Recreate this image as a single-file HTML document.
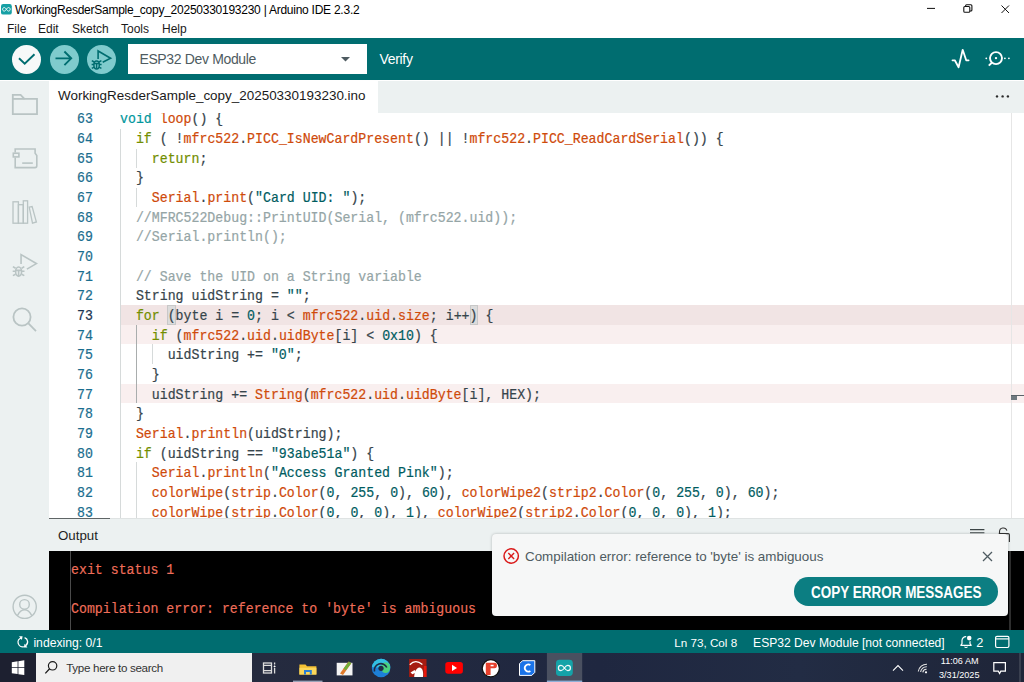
<!DOCTYPE html>
<html><head><meta charset="utf-8"><style>
*{margin:0;padding:0;box-sizing:border-box}
html,body{width:1024px;height:682px;overflow:hidden;background:#fff;font-family:"Liberation Sans",sans-serif;position:relative}
.a{position:absolute;white-space:nowrap}
svg{position:absolute;overflow:visible}
#title{left:15px;top:3px;font-size:12px;letter-spacing:-0.25px;color:#000}
.menu{top:21.7px;font-size:12px;color:#1a1a1a}
#toolbar{left:0;top:38px;width:1024px;height:42px;background:#006d70}
.circ{position:absolute;width:29px;height:29px;border-radius:50%;top:45px}
#board{left:128px;top:44.4px;width:239px;height:30px;background:#fff}
#sidebar{left:0;top:81px;width:49px;height:549px;background:#ecf1f1}
#tabbar{left:49px;top:81px;width:975px;height:32px;background:#ecf1f1}
#tab{left:49px;top:80px;width:329px;height:33px;background:#fff}
#editor{left:49px;top:113px;width:975px;height:406px;background:#fff;overflow:hidden}
.ln{position:absolute;left:0;width:44px;text-align:right;font-family:"Liberation Mono",monospace;font-size:13.24px;line-height:19.6px;color:#1a6d8e;height:19.6px;transform:scaleY(1.07);transform-origin:0 13.3px;-webkit-text-stroke:0.2px}
.cl i{font-style:normal}
.ln.act{color:#1b3552}
.cl{position:absolute;left:71px;white-space:pre;font-family:"Liberation Mono",monospace;font-size:13.24px;line-height:19.6px;color:#36444b;height:19.6px;transform:scaleY(1.07);transform-origin:0 13.3px;-webkit-text-stroke:0.2px}
#outhdr{left:49px;top:519px;width:975px;height:32px;background:#ecf1f1}
#console{left:49px;top:551px;width:975px;height:79px;background:#000}
.con{position:absolute;left:22px;font-family:"Liberation Mono",monospace;font-size:13.24px;line-height:19.6px;color:#ef6e5a;white-space:pre;transform:scaleY(1.08);transform-origin:0 13.3px;-webkit-text-stroke:0.15px}
#status{left:0;top:630px;width:1024px;height:23px;background:#006d70}
.st{top:636px;font-size:12px;color:#fff}
#taskbar{left:0;top:653px;width:1024px;height:29px;background:linear-gradient(90deg,#1d2030 0,#1d2030 36px,#252b3f 260px,#1f2740 600px,#222c44 800px,#1f2538 1024px)}
#popup{left:492px;top:534px;width:516px;height:82px;background:#f6f7f7;border-radius:4px;box-shadow:0 0 3px rgba(0,0,0,0.25)}
#copybtn{left:301.5px;top:43.4px;width:204px;height:28.4px;border-radius:14.2px;background:#0c7e82}
#copytxt{left:318.5px;top:48.7px;color:#fff;font-weight:bold;font-size:14px;transform:scale(0.963,1.18);transform-origin:0 0}
</style></head><body>
<div class="a" id="title">WorkingResderSample_copy_20250330193230 | Arduino IDE 2.3.2</div>
<svg style="left:1.2px;top:4.1px" width="12" height="11" viewBox="0 0 12 11"><rect x="0" y="0" width="10.8" height="10.6" rx="2.2" fill="#17a0a5"/><path d="M5.4 5.3C4.7 4.3 4.1 3.5 3.3 3.5C2.3 3.5 1.6 4.3 1.6 5.3S2.3 7.1 3.3 7.1C4.1 7.1 4.7 6.3 5.4 5.3C6.1 4.3 6.7 3.5 7.5 3.5C8.5 3.5 9.2 4.3 9.2 5.3S8.5 7.1 7.5 7.1C6.7 7.1 6.1 6.3 5.4 5.3Z" fill="none" stroke="#f0fafa" stroke-width="1"/></svg>
<div class="a menu" style="left:7px">File</div>
<div class="a menu" style="left:38px">Edit</div>
<div class="a menu" style="left:72px">Sketch</div>
<div class="a menu" style="left:121px">Tools</div>
<div class="a menu" style="left:162px">Help</div>
<svg style="left:927px;top:7px" width="9" height="2"><rect x="0" y="0.9" width="8" height="1" fill="#111"/></svg>
<svg style="left:963px;top:4px" width="10" height="10" viewBox="0 0 10 10"><path d="M2.6 2.3V1.7a1 1 0 0 1 1-1H7.9a1 1 0 0 1 1 1V6a1 1 0 0 1-1 1H7" fill="none" stroke="#111" stroke-width="1.1"/><rect x="0.8" y="2.5" width="6" height="5.8" rx="1.1" fill="none" stroke="#111" stroke-width="1.1"/></svg>
<svg style="left:1000.6px;top:4.7px" width="9" height="9" viewBox="0 0 9 9"><path d="M0.5 0.5L8 8M8 0.5L0.5 8" stroke="#111" stroke-width="1"/></svg>

<div class="a" id="toolbar"></div>
<div class="circ" style="left:12.25px;background:#f7f9f9"></div>
<svg style="left:0;top:38px" width="130" height="42">
<path d="M19 20.3L24.7 25.8L34.5 16.3" fill="none" stroke="#006d70" stroke-width="1.9"/>
</svg>
<div class="circ" style="left:49.65px;background:#7fcbcd"></div>
<svg style="left:0;top:38px" width="130" height="42">
<path d="M55.5 20.35H71.2M64.4 13.5L71.2 20.35L64.4 27.2" fill="none" stroke="#006d70" stroke-width="1.9"/>
</svg>
<div class="circ" style="left:87px;background:#7fcbcd"></div>
<svg style="left:0;top:38px" width="130" height="42">
<path d="M98.1 21V13L110.6 20.3L102.7 24.3" fill="none" stroke="#006d70" stroke-width="1.6"/>
<g fill="none" stroke="#006d70" stroke-width="1.5"><ellipse cx="96.6" cy="26.9" rx="2.7" ry="4"/><path d="M93.9 25.6H99.3M96.6 25.6V30.8M91.8 22.6L94.2 24M101.4 22.6L99 24M91.6 26.6H94M101.6 26.6H99.2M91.8 30.4L94.2 29.2M101.4 30.4L99 29.2"/></g>
</svg>
<div class="a" id="board"></div>
<div class="a" style="left:139.4px;top:51px;font-size:14px;letter-spacing:-0.35px;color:#4e5b61">ESP32 Dev Module</div>
<svg style="left:340px;top:56px" width="11" height="7"><path d="M1 1H10L5.5 5.6Z" fill="#4e5b61"/></svg>
<div class="a" style="left:379.4px;top:51px;font-size:14px;letter-spacing:-0.3px;color:#fff">Verify</div>
<svg style="left:940px;top:38px" width="84" height="42">
<path d="M12.5 22.3H14.8L18.6 29.2L22.7 11.8L26.2 22.3H28.6" fill="none" stroke="#fff" stroke-width="1.8" stroke-linejoin="round" stroke-linecap="round"/>
<circle cx="56" cy="20.1" r="6" fill="none" stroke="#fff" stroke-width="1.9"/>
<circle cx="56" cy="20.1" r="1.2" fill="#fff"/>
<path d="M48.8 27.6L51.8 24.8" stroke="#fff" stroke-width="1.9"/>
<circle cx="46.3" cy="20.3" r="0.9" fill="#fff"/><circle cx="64.9" cy="20.3" r="0.9" fill="#fff"/><circle cx="68.9" cy="20.3" r="0.9" fill="#fff"/>
</svg>

<div class="a" id="sidebar"></div>
<svg style="left:0;top:81px" width="49" height="549" viewBox="0 81 49 549">
<g fill="none" stroke="#b9c4c4" stroke-width="1.8">
<path d="M12.8 114.1V94.8H20.6L24.4 98.9H37V114.1Z"/>
<path d="M12.8 98.9H24.4"/>
</g>
<g fill="none" stroke="#b9c4c4" stroke-width="1.6">
<path d="M15.2 152.6V149H35.1V153.3L36.8 155.6V165.8Q36.8 167.6 35 167.6H15.2V157.4"/>
<rect x="13.3" y="153.2" width="5.6" height="3.7"/>
<path d="M22.2 163.1H32.8"/>
</g>
<g fill="none" stroke="#b9c4c4" stroke-width="1.3">
<rect x="13" y="201.8" width="5.4" height="21.4"/>
<rect x="18.4" y="204.7" width="4.9" height="18.5"/>
<rect x="23.3" y="200.8" width="4.3" height="22.4"/>
<path d="M29.2 207.1L32.1 206.5L36.4 222L32.5 223.1Z"/>
</g>
<g fill="none" stroke="#b9c4c4" stroke-width="1.6">
<path d="M21.05 264.1V254.6L36.4 263.6L26.9 269.1"/>
<ellipse cx="18.6" cy="271.6" rx="3" ry="4.6"/>
<path d="M15.6 270.4H21.6M18.6 270.4V276M12.9 266.6L15.6 268.2M24.3 266.6L21.6 268.2M12.7 271.2H15.6M24.5 271.2H21.6M12.9 275.6L15.6 274.2M24.3 275.6L21.6 274.2"/>
</g>
<g fill="none" stroke="#b9c4c4" stroke-width="1.8">
<circle cx="22" cy="317" r="8.6"/>
<path d="M28.4 323.4L36 331.2"/>
</g>
<g fill="none" stroke="#b9c4c4" stroke-width="1.4">
<circle cx="24.7" cy="606.8" r="11.6"/>
<circle cx="24.5" cy="604.4" r="4.8"/>
<path d="M17.4 615.6C19.5 611.6 22 609.8 24.6 609.8S29.7 611.6 31.8 615.6"/>
</g>
</svg>

<div class="a" id="tabbar"></div>
<div class="a" id="tab"></div>
<div class="a" style="left:58px;top:88.4px;font-size:13.45px;color:#1a1a1a">WorkingResderSample_copy_20250330193230.ino</div>
<svg style="left:990px;top:92px" width="24" height="8"><circle cx="7" cy="4.4" r="1.2" fill="#2a2a2a"/><circle cx="12.6" cy="4.4" r="1.2" fill="#2a2a2a"/><circle cx="17.9" cy="4.4" r="1.2" fill="#2a2a2a"/></svg>

<div class="a" id="editor">
<div class="a" style="left:71.8px;top:192.3px;width:904px;height:19.5px;background:#f1e4e4"></div>
<div class="a" style="left:71.8px;top:211.8px;width:904px;height:19.2px;background:#f9efef"></div>
<div class="a" style="left:71.8px;top:270.7px;width:904px;height:19.2px;background:#f9efef"></div>
<div class="a" style="left:71px;top:15.9px;width:1px;height:400px;background:#d6dada"></div>
<div class="a" style="left:86.9px;top:35.5px;width:1px;height:19.6px;background:#d6dada"></div>
<div class="a" style="left:86.9px;top:74.7px;width:1px;height:19.6px;background:#d6dada"></div>
<div class="a" style="left:86.9px;top:211.7px;width:1.3px;height:78.4px;background:#a9adad"></div>
<div class="a" style="left:102.8px;top:231.3px;width:1px;height:19.6px;background:#d6dada"></div>
<div class="a" style="left:86.9px;top:348.9px;width:1px;height:60px;background:#d6dada"></div>
<div class="a" style="left:118.4px;top:192.3px;width:8.6px;height:19.3px;background:#dcdcdc;border:1px solid #c8c8c8"></div>
<div class="a" style="left:421.2px;top:192.3px;width:8.1px;height:19.3px;background:#dcdcdc;border:1px solid #c8c8c8"></div>
<div class="ln" style="top:-2.70px">63</div>
<div class="cl" style="top:-2.70px"><i style="color:#00979d">void</i> <i style="color:#cf4a0a">loop</i>() {</div>
<div class="ln" style="top:16.97px">64</div>
<div class="cl" style="top:16.97px">  <i style="color:#728e00">if</i> ( !<i style="color:#cf4a0a">mfrc522</i>.<i style="color:#cf4a0a">PICC_IsNewCardPresent</i>() || !<i style="color:#cf4a0a">mfrc522</i>.<i style="color:#cf4a0a">PICC_ReadCardSerial</i>()) {</div>
<div class="ln" style="top:36.64px">65</div>
<div class="cl" style="top:36.64px">    <i style="color:#728e00">return</i>;</div>
<div class="ln" style="top:56.31px">66</div>
<div class="cl" style="top:56.31px">  }</div>
<div class="ln" style="top:75.98px">67</div>
<div class="cl" style="top:75.98px">    <i style="color:#cf4a0a">Serial</i>.<i style="color:#cf4a0a">print</i>(<i style="color:#005c5f">&quot;Card UID: &quot;</i>);</div>
<div class="ln" style="top:95.65px">68</div>
<div class="cl" style="top:95.65px">  <i style="color:#95a5a6">//MFRC522Debug::PrintUID(Serial, (mfrc522.uid));</i></div>
<div class="ln" style="top:115.32px">69</div>
<div class="cl" style="top:115.32px">  <i style="color:#95a5a6">//Serial.println();</i></div>
<div class="ln" style="top:134.99px">70</div>
<div class="cl" style="top:134.99px"></div>
<div class="ln" style="top:154.66px">71</div>
<div class="cl" style="top:154.66px">  <i style="color:#95a5a6">// Save the UID on a String variable</i></div>
<div class="ln" style="top:174.33px">72</div>
<div class="cl" style="top:174.33px">  String uidString = <i style="color:#005c5f">&quot;&quot;</i>;</div>
<div class="ln act" style="top:194.00px">73</div>
<div class="cl" style="top:194.00px">  <i style="color:#728e00">for</i> (byte i = <i style="color:#005c5f">0</i>; i &lt; <i style="color:#cf4a0a">mfrc522</i>.<i style="color:#cf4a0a">uid</i>.<i style="color:#cf4a0a">size</i>; i++) {</div>
<div class="ln" style="top:213.67px">74</div>
<div class="cl" style="top:213.67px">    <i style="color:#728e00">if</i> (<i style="color:#cf4a0a">mfrc522</i>.<i style="color:#cf4a0a">uid</i>.<i style="color:#cf4a0a">uidByte</i>[i] &lt; <i style="color:#005c5f">0x10</i>) {</div>
<div class="ln" style="top:233.34px">75</div>
<div class="cl" style="top:233.34px">      uidString += <i style="color:#005c5f">&quot;0&quot;</i>;</div>
<div class="ln" style="top:253.01px">76</div>
<div class="cl" style="top:253.01px">    }</div>
<div class="ln" style="top:272.68px">77</div>
<div class="cl" style="top:272.68px">    uidString += <i style="color:#cf4a0a">String</i>(<i style="color:#cf4a0a">mfrc522</i>.<i style="color:#cf4a0a">uid</i>.<i style="color:#cf4a0a">uidByte</i>[i], HEX);</div>
<div class="ln" style="top:292.35px">78</div>
<div class="cl" style="top:292.35px">  }</div>
<div class="ln" style="top:312.02px">79</div>
<div class="cl" style="top:312.02px">  <i style="color:#cf4a0a">Serial</i>.<i style="color:#cf4a0a">println</i>(uidString);</div>
<div class="ln" style="top:331.69px">80</div>
<div class="cl" style="top:331.69px">  <i style="color:#728e00">if</i> (uidString == <i style="color:#005c5f">&quot;93abe51a&quot;</i>) {</div>
<div class="ln" style="top:351.36px">81</div>
<div class="cl" style="top:351.36px">    <i style="color:#cf4a0a">Serial</i>.<i style="color:#cf4a0a">println</i>(<i style="color:#005c5f">&quot;Access Granted Pink&quot;</i>);</div>
<div class="ln" style="top:371.03px">82</div>
<div class="cl" style="top:371.03px">    <i style="color:#cf4a0a">colorWipe</i>(<i style="color:#cf4a0a">strip</i>.<i style="color:#cf4a0a">Color</i>(<i style="color:#005c5f">0</i>, <i style="color:#005c5f">255</i>, <i style="color:#005c5f">0</i>), <i style="color:#005c5f">60</i>), <i style="color:#cf4a0a">colorWipe2</i>(<i style="color:#cf4a0a">strip2</i>.<i style="color:#cf4a0a">Color</i>(<i style="color:#005c5f">0</i>, <i style="color:#005c5f">255</i>, <i style="color:#005c5f">0</i>), <i style="color:#005c5f">60</i>);</div>
<div class="ln" style="top:390.70px">83</div>
<div class="cl" style="top:390.70px">    <i style="color:#cf4a0a">colorWipe</i>(<i style="color:#cf4a0a">strip</i>.<i style="color:#cf4a0a">Color</i>(<i style="color:#005c5f">0</i>, <i style="color:#005c5f">0</i>, <i style="color:#005c5f">0</i>), <i style="color:#005c5f">1</i>), <i style="color:#cf4a0a">colorWipe2</i>(<i style="color:#cf4a0a">strip2</i>.<i style="color:#cf4a0a">Color</i>(<i style="color:#005c5f">0</i>, <i style="color:#005c5f">0</i>, <i style="color:#005c5f">0</i>), <i style="color:#005c5f">1</i>);</div>

<div class="a" style="left:961.5px;top:0;width:1px;height:406px;background:#e6e6e6"></div>
<div class="a" style="left:961.6px;top:281.6px;width:6.4px;height:5.4px;background:#6f7a80"></div>
<div class="a" style="left:961.6px;top:281.6px;width:14px;height:1.2px;background:#5a6268"></div>
</div>
<div class="a" style="left:49px;top:518.3px;width:975px;height:1px;background:#dfe3e3"></div>
<div class="a" style="left:49px;top:518px;width:61px;height:2px;background:#5f6566"></div>

<div class="a" id="outhdr"></div>
<div class="a" style="left:58px;top:527.8px;font-size:13.3px;color:#1f1f1f">Output</div>
<svg style="left:968px;top:524px" width="50" height="20"><path d="M2 5.6H16.4M2 8.7H16.4" stroke="#3c4446" stroke-width="1.1"/><path d="M31.5 9.5V7.8a3.8 3.8 0 0 1 7.4 -1.2" fill="none" stroke="#333" stroke-width="1.1"/><path d="M30.8 9.6H40.2A1.2 1.2 0 0 1 41.4 10.8V18" fill="none" stroke="#333" stroke-width="1.1"/></svg>
<div class="a" id="console">
<div class="a" style="left:20.5px;top:0;width:1.6px;height:79px;background:#4a4a4a"></div>
<div class="con" style="top:10.2px">exit status 1</div>
<div class="a" style="left:960px;top:0;width:1.6px;height:79px;background:#2e2e2e"></div>
<div class="con" style="top:49.4px">Compilation error: reference to 'byte' is ambiguous</div>
</div>

<div class="a" id="popup">
<svg style="left:10px;top:12.6px" width="18" height="18"><circle cx="9.2" cy="9" r="7.2" fill="none" stroke="#da1b1b" stroke-width="1.5"/><path d="M6.3 6.1L12.1 11.9M12.1 6.1L6.3 11.9" stroke="#da1b1b" stroke-width="1.4"/></svg>
<div class="a" style="left:33px;top:14.8px;font-size:13.4px;color:#4e5b61">Compilation error: reference to 'byte' is ambiguous</div>
<svg style="left:490px;top:16.5px" width="11" height="11"><path d="M1 1L10 10M10 1L1 10" stroke="#4e5b61" stroke-width="1.3"/></svg>
<div class="a" id="copybtn"></div><div class="a" id="copytxt">COPY ERROR MESSAGES</div>
</div>

<div class="a" id="status"></div>
<svg style="left:12.6px;top:632px" width="20" height="20"><path d="M8.4 5.8A4.5 4.5 0 0 0 10.8 14.6M11.6 5.6A4.5 4.5 0 0 1 12.6 13.6" fill="none" stroke="#fff" stroke-width="1.3"/><path d="M6 4.2L9.6 4.3L8.9 8Z M14.4 15.4L10.8 15.5L11.6 11.8Z" fill="#fff"/></svg>
<div class="a st" style="left:33.4px;font-size:12.2px">indexing: 0/1</div>
<div class="a st" style="left:674.2px;font-size:11.7px">Ln 73, Col 8</div>
<div class="a st" style="left:753.1px;font-size:12.1px">ESP32 Dev Module [not connected]</div>
<svg style="left:958px;top:633px" width="18" height="18"><path d="M2.8 12.3H13.2L12 10.6V7.6A4 4 0 0 0 4 7.6V10.6Z" fill="none" stroke="#fff" stroke-width="1.2" stroke-linejoin="round"/><path d="M6.6 13.6a1.5 1.5 0 0 0 2.8 0" fill="none" stroke="#fff" stroke-width="1.1"/><circle cx="11.2" cy="5.1" r="3.3" fill="#006d70"/><circle cx="11.2" cy="5.1" r="2.3" fill="#fff"/></svg>
<div class="a st" style="left:976.2px;top:635.2px;font-size:12.8px">2</div>
<svg style="left:994px;top:635px" width="17" height="14"><rect x="1.6" y="1.3" width="13.3" height="11.2" rx="1.4" fill="none" stroke="#fff" stroke-width="1.2"/><path d="M1.6 3.9H14.9" stroke="#fff" stroke-width="1.2"/></svg>

<div class="a" id="taskbar"></div>
<div class="a" style="left:36px;top:653px;width:215.5px;height:29px;background:#f0f0f0"></div>
<svg style="left:0;top:653px" width="1024" height="29" viewBox="0 653 1024 29">
<path d="M11.8 662.2L17.6 661.3V667.3H11.8ZM18.4 661.2L24.3 660.3V667.3H18.4ZM11.8 668.1H17.6V674.1L11.8 673.2ZM18.4 668.1H24.3V675.1L18.4 674.2Z" fill="#fff"/>
<circle cx="52.6" cy="665.8" r="4.2" fill="none" stroke="#1a1a1a" stroke-width="1.2"/>
<path d="M49.6 668.8L45.3 673.4" stroke="#1a1a1a" stroke-width="1.3"/>
<g stroke="#dcdcdc" stroke-width="1.3" fill="none"><rect x="263.5" y="663" width="8" height="10"/><path d="M263.5 665.3H271.5M263.5 670.7H271.5M274.6 662.4V664.6M274.6 668V673.6"/></g><path d="M273.4 666.4L274.6 665.2L275.8 666.4L274.6 667.6Z" fill="#fff"/>
<path d="M299.4 664.6H305.5L307 666.2H316.4V674.6H299.4Z" fill="#f3c033"/>
<path d="M299.4 667.8H316.4V674.6H299.4Z" fill="#fbd75b"/>
<path d="M304 670H311.8V674.6H309.8V672H306V674.6H304Z" fill="#2a7fd4"/>
<rect x="293" y="680.6" width="29.5" height="1.4" fill="#9aa3b8"/>
<rect x="336.7" y="662.8" width="15.8" height="12.6" fill="#f4f4f4"/>
<path d="M340 673.5L348.5 661.5L351.3 663.2L343 675Z" fill="#e07a2a"/>
<path d="M343.5 668.6L349 661.5L351.3 663.2L346 670.3Z" fill="#6fae3a"/>
<circle cx="381.1" cy="668" r="9.3" fill="#1d80d8"/>
<path d="M371.9 667A9.3 9.3 0 0 1 390.3 666.5L384 668Z" fill="#33bfe2"/>
<ellipse cx="385.6" cy="667.6" rx="4.6" ry="5.4" fill="#4bd07e"/>
<path d="M374.5 671.5A6.5 6.5 0 0 1 386.8 667.5" fill="none" stroke="#1e2a46" stroke-width="1.6"/>
<circle cx="381" cy="668.3" r="2.6" fill="#1e2a46"/>
<rect x="409.1" y="659" width="17.4" height="18" fill="#a61c12"/>
<rect x="424" y="666" width="2.5" height="11" fill="#e8180c"/>
<path d="M409.8 664.8Q415.5 658.6 422.4 664.6" fill="none" stroke="#fff" stroke-width="1.3"/>
<path d="M414.2 677C414.4 672 416 667.8 419.6 667.4C422.6 667.6 423.6 672 423 677Z" fill="#fff"/>
<path d="M410.5 672.4L414.6 670L416.2 672.4L412.4 674.2Z" fill="#fff"/>
<rect x="445.3" y="662" width="17.6" height="11.8" rx="2.8" fill="#ff0000"/>
<path d="M452 664.8V671L457 667.9Z" fill="#fff"/>
<circle cx="490.8" cy="668.3" r="8.6" fill="#fff" stroke="#111" stroke-width="1.3"/>
<path d="M485.8 675V662.8H494.4C496.4 662.8 497 664 497 665.5C497 667 496.4 668.2 494.4 668.2H490.6V675Z" fill="#e8412c"/>
<path d="M490.6 664.8H493.6V666.3H490.6Z" fill="#fff"/>
<path d="M522.5 660.7H534.8V672.4L531.8 675.4H519.5V663.7Z" fill="#1a73e8" stroke="#fff" stroke-width="1"/>
<path d="M530.4 665A3.6 3.6 0 1 0 530.4 671" fill="none" stroke="#fff" stroke-width="1.7"/>
<rect x="546.9" y="653" width="35.3" height="29" fill="#4a5060"/>
<rect x="556" y="659.8" width="16.8" height="16.2" rx="3.4" fill="#15a3a8"/>
<path d="M564.4 668C563.2 666.2 562.2 665.4 561 665.4C559.5 665.4 558.4 666.5 558.4 668S559.5 670.6 561 670.6C562.2 670.6 563.2 669.8 564.4 668C565.6 666.2 566.6 665.4 567.8 665.4C569.3 665.4 570.4 666.5 570.4 668S569.3 670.6 567.8 670.6C566.6 670.6 565.6 669.8 564.4 668Z" fill="none" stroke="#f2fafa" stroke-width="1.2"/>
<rect x="546.9" y="680.6" width="35.3" height="1.4" fill="#8fb0d8"/>
<path d="M893 670.6L898 665.6L903 670.6" fill="none" stroke="#fff" stroke-width="1.1"/>
<g fill="none" stroke="#e6e6e6" stroke-width="1.1"><path d="M918.3 671.5A8.5 8.5 0 0 1 927 664.2"/><path d="M920.6 672A6 6 0 0 1 926.8 666.7"/><path d="M922.8 672.3A3.6 3.6 0 0 1 926.6 669.2"/></g>
<circle cx="926" cy="672.3" r="1.1" fill="#fff"/>
<path d="M993.8 662.6H1005.4V671.2H1000.8L999.6 673.5L998.3 671.2H993.8Z" fill="none" stroke="#fff" stroke-width="1.2"/>
<rect x="1019.5" y="653" width="1" height="29" fill="#555a66"/>
</svg>
<div class="a" style="left:66.2px;top:661.3px;font-size:11.6px;letter-spacing:-0.3px;color:#333">Type here to search</div>
<div class="a" style="left:940.8px;top:656px;font-size:9.1px;color:#fff">11:06 AM</div>
<div class="a" style="left:939px;top:670.2px;font-size:9.1px;color:#fff">3/31/2025</div>
</body></html>
